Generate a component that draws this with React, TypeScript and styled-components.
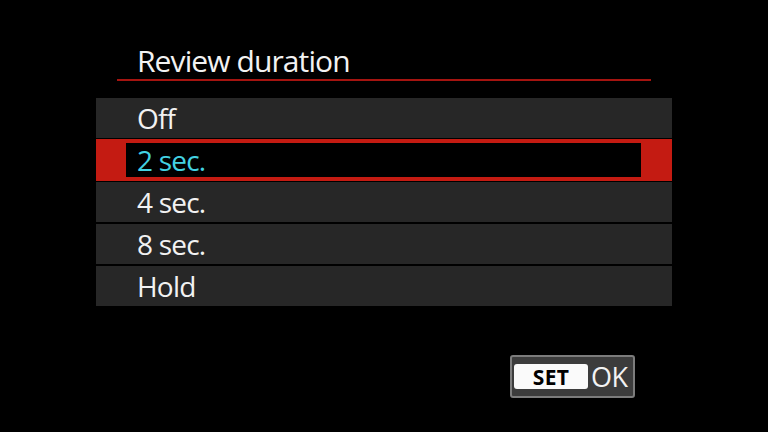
import styled, { createGlobalStyle } from "styled-components";

const GlobalStyle = createGlobalStyle`
  html, body {
    margin: 0;
    padding: 0;
    background: #000;
  }
  body {
    font-family: "Open Sans", "Noto Sans", "Liberation Sans", sans-serif;
  }
`;

const Screen = styled.div`
  width: 768px;
  height: 432px;
  box-sizing: border-box;
  padding-top: 45px;
  background: #000;
  display: flex;
  flex-direction: column;
  overflow: hidden;
`;

const Header = styled.h1`
  margin: 0 117px;
  padding: 0 0 2px 20px;
  border-bottom: 2px solid #a51410;
  font-size: 30px;
  font-weight: 400;
  line-height: 32px;
  letter-spacing: -0.9px;
  color: #f2f2f2;
`;

const List = styled.ul`
  list-style: none;
  margin: 17px 96px 0;
  padding: 0;
  display: flex;
  flex-direction: column;
  gap: 2px;
`;

const Row = styled.li<{ $selected?: boolean }>`
  box-sizing: border-box;
  font-size: 28px;
  letter-spacing: -0.8px;
  ${(p) =>
    p.$selected
      ? `
    height: 42px;
    margin: -1px 0;
    background: #000;
    border-style: solid;
    border-color: #c41b12;
    border-width: 4px 31px 4px 30px;
    padding-left: 11px;
    line-height: 34px;
    color: #43d2e2;
  `
      : `
    height: 40px;
    background: #272727;
    padding-left: 41px;
    line-height: 40px;
    color: #f2f2f2;
  `}
`;

const Footer = styled.div`
  display: flex;
  justify-content: flex-end;
  margin: 49px 133px 0 0;
`;

const SetButton = styled.div`
  box-sizing: border-box;
  height: 43px;
  width: 125px;
  display: flex;
  align-items: center;
  padding: 0 2px;
  background: #3c3c3c;
  border: 2px solid #7c7c7c;
  border-radius: 3px;
`;

const SetKey = styled.span`
  width: 74px;
  height: 25px;
  display: flex;
  align-items: center;
  justify-content: center;
  background: #fafafa;
  border-radius: 3px;
  color: #000;
  font-size: 21px;
  font-weight: 700;
  letter-spacing: 0.3px;
`;

const OkLabel = styled.span`
  margin-left: 3px;
  color: #f2f2f2;
  font-size: 27px;
  line-height: 1;
  letter-spacing: -0.5px;
`;

const options = ["Off", "2 sec.", "4 sec.", "8 sec.", "Hold"];
const selected = 1;

export default function App() {
  return (
    <Screen>
      <GlobalStyle />
      <Header>Review duration</Header>
      <List>
        {options.map((o, i) => (
          <Row key={o} $selected={i === selected}>
            {o}
          </Row>
        ))}
      </List>
      <Footer>
        <SetButton>
          <SetKey>SET</SetKey>
          <OkLabel>OK</OkLabel>
        </SetButton>
      </Footer>
    </Screen>
  );
}
